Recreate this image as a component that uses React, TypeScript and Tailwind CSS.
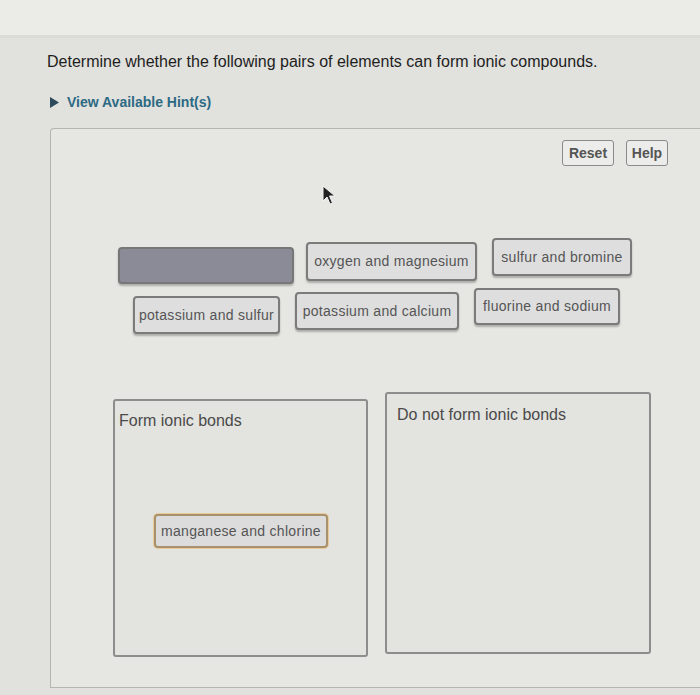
import React from 'react';

const tile =
  'flex items-center justify-center rounded-[4px] border-2 border-[#7b7b7b] bg-[#dedede] text-[14px] tracking-[0.3px] text-[#555] shadow-[0_2px_2px_rgba(0,0,0,0.25)]';

export default function App() {
  return (
    <div
      className="relative w-[700px] h-[695px] overflow-hidden bg-[#e1e1dd]"
      style={{ fontFamily: '"Liberation Sans", Arial, sans-serif' }}
    >
      {/* top band */}
      <div className="h-[38px] bg-[#ebebe8] border-b-[3px] border-[#dcdcd6]" />

      <div className="pl-[47px] pt-[12px] text-[16px] text-[#1e1e1e]">
        Determine whether the following pairs of elements can form ionic compounds.
      </div>

      <div className="flex items-center gap-[8px] pl-[50px] pt-[18px] text-[14px] font-bold text-[#2c6a84]">
        <svg width="9" height="11" viewBox="0 0 9 11">
          <path d="M0 0 L9 5.5 L0 11 Z" fill="#2e4a5a" />
        </svg>
        <span>View Available Hint(s)</span>
      </div>

      {/* activity panel */}
      <div className="ml-[50px] mt-[15px] h-[560px] rounded-tl-[4px] border-l border-t border-b border-[#b4b4b0] bg-[#e6e6e2]">
        <div className="flex justify-end gap-[12px] pr-[32px] pt-[11px]">
          <div className="flex h-[26px] w-[52px] items-center justify-center rounded-[3px] border border-[#8a8a8a] bg-[#ececea] text-[14px] font-bold text-[#555]">
            Reset
          </div>
          <div className="flex h-[26px] w-[42px] items-center justify-center rounded-[3px] border border-[#8a8a8a] bg-[#ececea] text-[14px] font-bold text-[#555]">
            Help
          </div>
        </div>

        {/* row 1 */}
        <div className="mt-[72px] flex h-[47px] items-start">
          <div className="ml-[67px] mt-[9px] h-[37px] w-[176px] rounded-[4px] border-2 border-[#777] bg-[#8b8a97] shadow-[0_2px_2px_rgba(0,0,0,0.25)]" />
          <div className={`${tile} ml-[12px] mt-[4px] h-[39px] w-[171px]`}>oxygen and magnesium</div>
          <div className={`${tile} ml-[15px] h-[38px] w-[140px]`}>sulfur and bromine</div>
        </div>

        {/* row 2 */}
        <div className="mt-[3px] flex h-[46px] items-start">
          <div className={`${tile} ml-[82px] mt-[8px] h-[38px] w-[147px]`}>potassium and sulfur</div>
          <div className={`${tile} ml-[15px] mt-[4px] h-[38px] w-[164px]`}>potassium and calcium</div>
          <div className={`${tile} ml-[15px] h-[37px] w-[146px]`}>fluorine and sodium</div>
        </div>

        {/* bins */}
        <div className="mt-[58px] flex items-start">
          <div className="ml-[62px] mt-[7px] h-[258px] w-[255px] rounded-[3px] border-2 border-[#8d8d8d] bg-[#e3e3df] pl-[4px] pt-[8px]">
            <div className="text-[16px] text-[#4a4a4a]">Form ionic bonds</div>
            <div className="ml-[35px] mt-[81px] flex h-[34px] w-[174px] items-center justify-center rounded-[4px] border-2 border-[#a8926e] bg-[#dcdcdc] text-[14px] tracking-[0.3px] text-[#555] shadow-[0_0_0_1px_#e8c99a]">
              manganese and chlorine
            </div>
          </div>
          <div className="ml-[17px] h-[262px] w-[266px] rounded-[3px] border-2 border-[#8d8d8d] bg-[#e3e3df] pl-[10px] pt-[9px]">
            <div className="text-[16px] text-[#4a4a4a]">Do not form ionic bonds</div>
          </div>
        </div>
      </div>

      {/* cursor */}
      <svg className="absolute left-[322px] top-[185px]" width="16" height="20" viewBox="0 0 16 20">
        <path d="M1 1 L1 16 L5 12 L8 19 L10.5 18 L7.5 11 L13 11 Z" fill="#222" stroke="#f4f4f4" strokeWidth="1" />
      </svg>
    </div>
  );
}
